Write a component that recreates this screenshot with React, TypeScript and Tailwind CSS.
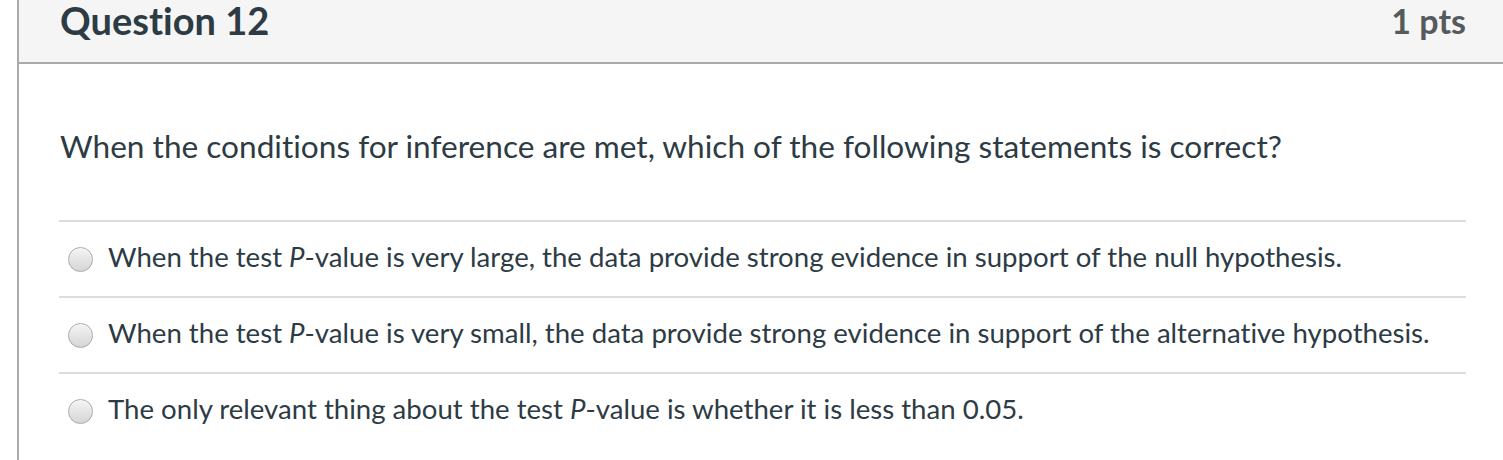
import React from 'react';

const answers: { before: string; after: string }[] = [
  { before: 'When the test ', after: '-value is very large, the data provide strong evidence in support of the null hypothesis.' },
  { before: 'When the test ', after: '-value is very small, the data provide strong evidence in support of the alternative hypothesis.' },
  { before: 'The only relevant thing about the test ', after: '-value is whether it is less than 0.05.' },
];

const Radio: React.FC = () => (
  <span className="shrink-0 w-[25px] h-[25px] rounded-full border border-[#a9a9a9] bg-gradient-to-b from-[#f4f4f4] to-[#d6d6d6] shadow-[inset_0_1px_1px_rgba(255,255,255,0.8)]" />
);

const App: React.FC = () => {
  return (
    <div
      className="h-[460px] bg-white overflow-hidden pl-[17px] [font-variant-ligatures:none]"
      style={{ fontFamily: 'Lato, "Noto Sans", sans-serif' }}
    >
      <div className="h-full border-l-2 border-[#aaaaaa]">
        {/* Header */}
        <div className="h-[64px] bg-[#f5f5f5] border-b-2 border-[#aaaaaa] flex items-start justify-between pl-[41px] pr-[37px]">
          <h2 className="text-[38px] leading-[40px] font-bold text-[#2d3b45]">Question 12</h2>
          <span className="text-[34px] leading-[42px] font-bold text-[#555a5e]">1 pts</span>
        </div>

        {/* Body */}
        <div className="pl-[40px] pr-[37px]">
          <p className="text-[31.6px] leading-[40px] text-[#2d3b45] pt-[62px] pb-[54px] pl-[1px]">
            When the conditions for inference are met, which of the following statements is correct?
          </p>

          <div>
            {answers.map((a, i) => (
              <div key={i} className="h-[76px] border-t-2 border-[#dddddd] flex items-center gap-[15px] pl-[9px]">
                <Radio />
                <span className="text-[27.6px] text-[#2d3b45] -mt-[4px]">
                  {a.before}
                  <em>P</em>
                  {a.after}
                </span>
              </div>
            ))}
          </div>
        </div>
      </div>
    </div>
  );
};

export default App;
